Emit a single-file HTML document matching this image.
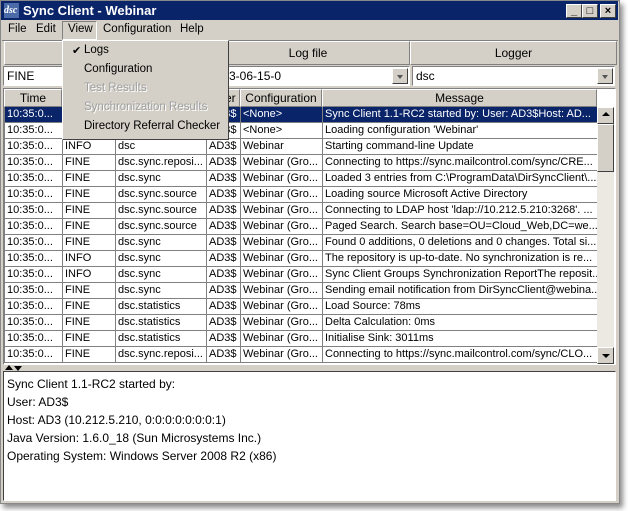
<!DOCTYPE html>
<html><head><style>
*{margin:0;padding:0;box-sizing:border-box}
body{width:628px;height:511px;background:#fff;position:relative;overflow:hidden;font:11px "Liberation Sans",sans-serif;color:#000}
.a{position:absolute}
.win{left:0;top:0;width:620px;height:504px;background:#d4d0c8;border:1px solid #888;box-shadow:3px 4px 5px rgba(0,0,0,.45)}
.title{left:1px;top:1px;width:617px;height:19px;background:#0a246a;color:#fff;font-weight:bold;font-size:13px;line-height:19px}
.tb{width:16px;height:14px;top:3px;background:#d4d0c8;border:1px solid;border-color:#fff #404040 #404040 #fff;color:#000;font-size:11px;line-height:12px;text-align:center;font-weight:bold}
.menu span{position:absolute;top:23px;font-size:11.5px}
.hb{top:41px;height:24px;background:#d4d0c8;border:1px solid;border-color:#fff #808080 #808080 #fff;text-align:center;line-height:22px;font-size:12px}
.cb{top:66px;height:20px;background:#fff;border:1px solid;border-color:#808080 #fff #fff #808080;line-height:18px;padding-left:3px;font-size:12px}
.dd{width:16px;height:16px;top:1px;right:1px;background:#d4d0c8;border:1px solid;border-color:#fff #404040 #404040 #fff}
.dd:after{content:"";position:absolute;left:4px;top:6px;border:3px solid transparent;border-top:4px solid #555}
.th{top:89px;height:18px;background:#d4d0c8;border:1px solid;border-color:#fff #808080 #808080 #fff;text-align:center;line-height:16px;font-size:12px}
.row{left:4px;width:593px;height:16px;background:#fff}
.row div{position:absolute;top:0;height:16px;border-left:1px solid #808080;border-bottom:1px solid #808080;line-height:15px;padding-left:2px;white-space:nowrap;overflow:hidden}
.sel div{background:#0a246a;color:#fff}
.dm{left:62px;top:40px;width:167px;height:100px;background:#d4d0c8;border:1px solid;border-color:#fff #404040 #404040 #fff;font-size:11.5px}
.dm span{position:absolute;left:21px}
.dis{color:#a0a0a0;text-shadow:1px 1px 0 #fff}
</style></head><body>
<div class="a win"></div>
<div class="a title"><span style="position:absolute;left:3px;top:2px;width:15px;height:15px;background:#4a6aa8;font:italic bold 10px 'Liberation Serif',serif;line-height:15px;color:#fff">dsc</span><span style="position:absolute;left:22px">Sync Client - Webinar</span>
<div class="a tb" style="left:565px">_</div><div class="a tb" style="left:581px">□</div><div class="a tb" style="left:599px">×</div></div>
<div class="menu"><span style="left:8px">File</span><span style="left:36px">Edit</span><span style="left:68px">View</span><span style="left:103px">Configuration</span><span style="left:180px">Help</span></div>
<div class="a" style="left:62px;top:21px;width:35px;height:19px;border:1px solid;border-color:#808080 #fff #fff #808080"></div>
<div class="a" style="left:2px;top:40px;width:616px;height:1px;background:#808080"></div>
<div class="a hb" style="left:4px;width:202px"></div>
<div class="a hb" style="left:206px;width:204px">Log file</div>
<div class="a hb" style="left:410px;width:207px">Logger</div>
<div class="a cb" style="left:3px;width:200px">FINE</div>
<div class="a cb" style="left:206px;width:204px"><span style="position:absolute;left:22px">3-06-15-0</span><div class="a dd"></div></div>
<div class="a cb" style="left:412px;width:203px">dsc<div class="a dd"></div></div>
<div class="a" style="left:3px;top:88px;width:613px;height:277px;background:#fff;border:1px solid;border-color:#808080 #fff #fff #808080"></div>
<div class="a th" style="left:4px;width:58px">Time</div>
<div class="a th" style="left:62px;width:53px">Level</div>
<div class="a th" style="left:115px;width:91px">Logger</div>
<div class="a th" style="left:206px;width:34px">User</div>
<div class="a th" style="left:240px;width:82px">Configuration</div>
<div class="a th" style="left:322px;width:275px">Message</div>
<div id="rows"></div>
<div class="a" style="left:597px;top:107px;width:17px;height:257px;background:#ece9e2"></div>
<div class="a" style="left:597px;top:107px;width:17px;height:17px;background:#d4d0c8;border:1px solid;border-color:#fff #404040 #404040 #fff"><div class="a" style="left:4px;top:4px;border:4px solid transparent;border-bottom:4px solid #000;border-top:0"></div></div>
<div class="a" style="left:597px;top:124px;width:17px;height:48px;background:#d4d0c8;border:1px solid;border-color:#fff #404040 #404040 #fff"></div>
<div class="a" style="left:597px;top:347px;width:17px;height:17px;background:#d4d0c8;border:1px solid;border-color:#fff #404040 #404040 #fff"><div class="a" style="left:4px;top:6px;border:4px solid transparent;border-top:4px solid #000;border-bottom:0"></div></div>
<div class="a" style="left:5px;top:365px;border:4px solid transparent;border-bottom:5px solid #000;border-top:0"></div>
<div class="a" style="left:14px;top:366px;border:4px solid transparent;border-top:5px solid #000;border-bottom:0"></div>
<div class="a" style="left:3px;top:371px;width:613px;height:130px;background:#fff;border:1px solid;border-color:#404040 #fff #fff #404040;padding:3px 0 0 3px;line-height:18px;font-size:12px">Sync Client 1.1-RC2 started by:<br>User: AD3$<br>Host: AD3 (10.212.5.210, 0:0:0:0:0:0:0:1)<br>Java Version: 1.6.0_18 (Sun Microsystems Inc.)<br>Operating System: Windows Server 2008 R2 (x86)</div>
<div class="a dm"><span style="left:9px;top:3px;font-size:11px">✔</span><span style="top:3px">Logs</span><span style="top:22px">Configuration</span><span class="dis" style="top:41px">Test Results</span><span class="dis" style="top:60px">Synchronization Results</span><span style="top:79px">Directory Referral Checker</span></div>
<script>
var d=[["INFO","dsc","AD3$","&lt;None&gt;","Sync Client 1.1-RC2 started by: User: AD3$Host: AD..."],
["INFO","dsc","AD3$","&lt;None&gt;","Loading configuration 'Webinar'"],
["INFO","dsc","AD3$","Webinar","Starting command-line Update"],
["FINE","dsc.sync.reposi...","AD3$","Webinar (Gro...","Connecting to https://sync.mailcontrol.com/sync/CRE..."],
["FINE","dsc.sync","AD3$","Webinar (Gro...","Loaded 3 entries from C:\\ProgramData\\DirSyncClient\\..."],
["FINE","dsc.sync.source","AD3$","Webinar (Gro...","Loading source Microsoft Active Directory"],
["FINE","dsc.sync.source","AD3$","Webinar (Gro...","Connecting to LDAP host 'ldap://10.212.5.210:3268'. ..."],
["FINE","dsc.sync.source","AD3$","Webinar (Gro...","Paged Search. Search base=OU=Cloud_Web,DC=we..."],
["FINE","dsc.sync","AD3$","Webinar (Gro...","Found 0 additions, 0 deletions and 0 changes. Total si..."],
["INFO","dsc.sync","AD3$","Webinar (Gro...","The repository is up-to-date. No synchronization is re..."],
["INFO","dsc.sync","AD3$","Webinar (Gro...","Sync Client Groups Synchronization ReportThe reposit..."],
["FINE","dsc.sync","AD3$","Webinar (Gro...","Sending email notification from DirSyncClient@webina..."],
["FINE","dsc.statistics","AD3$","Webinar (Gro...","Load Source: 78ms"],
["FINE","dsc.statistics","AD3$","Webinar (Gro...","Delta Calculation: 0ms"],
["FINE","dsc.statistics","AD3$","Webinar (Gro...","Initialise Sink: 3011ms"],
["FINE","dsc.sync.reposi...","AD3$","Webinar (Gro...","Connecting to https://sync.mailcontrol.com/sync/CLO..."]];
var x=[0,58,111,202,236,318,593],h="";
d.forEach(function(r,i){var c=["10:35:0..."].concat(r);h+='<div class="a row'+(i==0?' sel':'')+'" style="top:'+(107+i*16)+'px">';
c.forEach(function(t,j){h+='<div style="left:'+x[j]+'px;width:'+(x[j+1]-x[j])+'px">'+t+'</div>'});h+='</div>'});
document.getElementById('rows').innerHTML=h;
</script>
</body></html>
